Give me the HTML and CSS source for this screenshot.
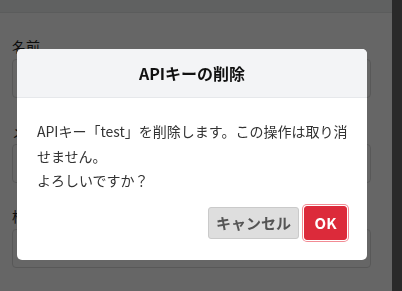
FILE: index.html
```html
<!DOCTYPE html>
<html lang="ja">
<head>
<meta charset="utf-8">
<title>APIキーの削除</title>
<link rel="stylesheet" href="styles.css">
</head>
<body>
<div class="app">
  <div class="main">
    <div class="topbar"></div>
    <div class="form">
      <div class="field">
        <label class="label">名前</label>
        <div class="input"></div>
      </div>
      <div class="field">
        <label class="label">メ</label>
        <div class="input"></div>
      </div>
      <div class="field">
        <label class="label">権</label>
        <div class="input"></div>
      </div>
    </div>
  </div>
  <div class="side"></div>
</div>

<div class="overlay">
  <div class="modal">
    <div class="modal-header">
      <h2 class="modal-title">APIキーの削除</h2>
    </div>
    <div class="modal-body">
      <p class="message">APIキー「test」を削除します。この操作は取り消せません。<br>よろしいですか？</p>
      <div class="actions">
        <button class="btn btn-cancel">キャンセル</button>
        <button class="btn btn-ok">OK</button>
      </div>
    </div>
  </div>
</div>
</body>
</html>
```

FILE: styles.css
```css
html, body {
  margin: 0;
  padding: 0;
  width: 402px;
  height: 291px;
  overflow: hidden;
  font-family: "Noto Sans CJK JP", "Noto Sans", sans-serif;
}

.app {
  display: flex;
  height: 291px;
  background: #ffffff;
}

.main {
  flex: 1;
  display: flex;
  flex-direction: column;
}

.topbar {
  height: 12px;
  background: #f0f2f2;
  border-bottom: 1px solid #e4e6e6;
}

.form {
  padding: 23px 21px 0 12px;
  display: flex;
  flex-direction: column;
  gap: 23px;
}

.field {
  display: flex;
  flex-direction: column;
}

.label {
  font-size: 14px;
  line-height: 20px;
  color: #222;
  margin-bottom: 3px;
}

.input {
  height: 37px;
  border: 1px solid #dcdcdc;
  border-radius: 4px;
  background: #fff;
}

.side {
  width: 10px;
  background: #6a6a6a;
}

.overlay {
  position: fixed;
  inset: 0;
  background: rgba(0, 0, 0, 0.6);
  padding: 49px 0 0 17px;
}

.modal {
  width: 350px;
  height: 211px;
  background: #fff;
  border-radius: 5px;
  overflow: hidden;
  display: flex;
  flex-direction: column;
}

.modal-header {
  height: 48px;
  background: #f3f4f6;
  border-bottom: 1px solid #e6e8eb;
  display: flex;
  align-items: center;
  justify-content: center;
}

.modal-title {
  margin: 0;
  font-size: 16px;
  font-weight: 700;
  color: #111;
}

.modal-body {
  padding: 21px 19px 0 20px;
  display: flex;
  flex-direction: column;
}

.message {
  margin: 0;
  font-size: 14px;
  line-height: 24.5px;
  color: #333;
}

.actions {
  display: flex;
  justify-content: flex-end;
  align-items: center;
  gap: 5px;
  margin-top: 13px;
  padding-right: 1px;
}

.btn {
  font-family: inherit;
  font-size: 15px;
  font-weight: 700;
  border-radius: 3px;
  cursor: pointer;
  padding: 0;
}

.btn-cancel {
  width: 91px;
  height: 32px;
  background: #dedede;
  border: 1px solid #cacaca;
  color: #555;
}

.btn-ok {
  width: 43px;
  height: 34px;
  background: #dc2a3a;
  border: 1px solid #dc2a3a;
  color: #fff;
  box-shadow: 0 0 0 1px #fff, 0 0 0 2px #f28b94;
}
```
